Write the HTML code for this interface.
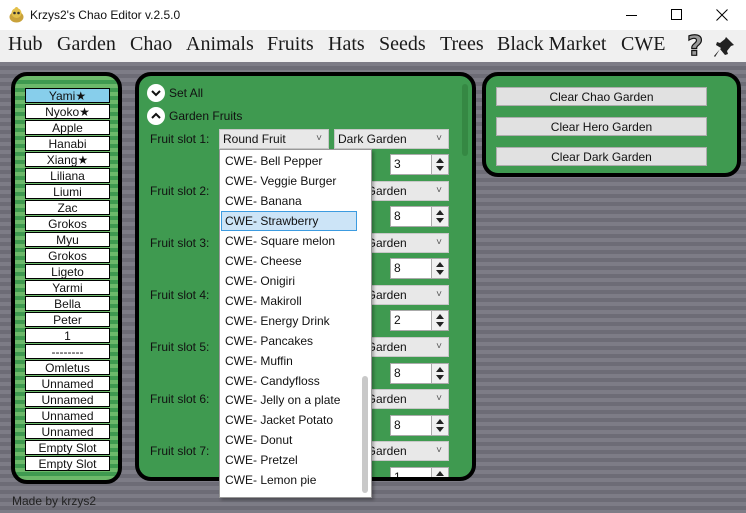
<!DOCTYPE html>
<html><head><meta charset="utf-8"><style>
*{box-sizing:border-box;margin:0;padding:0}
body{width:746px;height:513px;overflow:hidden;position:relative;font-family:"Liberation Sans","DejaVu Sans",sans-serif;font-size:12px;color:#111;background:#fff}
.abs{position:absolute}
#title{left:0;top:0;width:746px;height:30px;background:#fff}
#menu{left:0;top:30px;width:746px;height:32px;background:#f0f0f0;font-family:"Liberation Serif",serif;font-size:20px;color:#1a1a1a}
#menu span{position:absolute;top:3px}
#bg{left:0;top:62px;width:746px;height:451px;background:repeating-linear-gradient(180deg,#7d7c86 0 4px,#6d6c76 4px 8px)}
.panel{border:4px solid #000;border-radius:16px;background:#3f9a50}
#left{left:11px;top:72px;width:111px;height:412px;background:repeating-linear-gradient(180deg,#6cb96a 0 4px,#3f9a50 4px 8px)}
.item{position:absolute;left:25px;width:85px;height:15px;background:#fff;border:1px solid #000;text-align:center;font-size:12px;line-height:14px}
#mid{left:135px;top:72px;width:341px;height:409px}
#right{left:482px;top:72px;width:259px;height:105px}
.btn{position:absolute;left:496px;width:211px;height:19px;background:#e1e1e1;border:1px solid #adadad;text-align:center;line-height:19px;font-size:12px}
.lbl{position:absolute;left:150px;font-size:12px;color:#111}
.combo{position:absolute;height:20px;background:#e8e8e8;border:1px solid #c8c8c8;font-size:12px;line-height:18px;padding-left:3px}
.combo:after{content:"˅";position:absolute;right:6px;top:0;font-size:10px;color:#555}
.num{position:absolute;left:390px;width:59px;height:21px;background:#fff;border:1px solid #aaa;font-size:12px;line-height:19px;padding-left:3px}
.num i{position:absolute;right:0;top:0;width:17px;height:19px;background:#f0f0f0;border-left:1px solid #aaa}
.num i:before{content:"";position:absolute;left:4px;top:3px;border:4px solid transparent;border-top:0;border-bottom:5px solid #222}
.num i:after{content:"";position:absolute;left:4px;top:11px;border:4px solid transparent;border-bottom:0;border-top:5px solid #222}
#dd{left:219px;top:149px;width:153px;height:349px;background:#fff;border:1px solid #999;box-shadow:2px 2px 3px rgba(0,0,0,.3)}
.opt{position:absolute;left:5px;font-size:12px;color:#111}
.circ{position:absolute;left:147px;width:18px;height:18px;border-radius:50%;background:#fff}
</style></head><body>
<div id="title" class="abs">
 <svg class="abs" style="left:8px;top:7px" width="17" height="16"><ellipse cx="8.5" cy="10" rx="7" ry="5.5" fill="#c9a23a"/><circle cx="8.5" cy="6" r="5" fill="#e3c04a"/><circle cx="6.5" cy="6" r="1.3" fill="#333"/><circle cx="10.5" cy="6" r="1.3" fill="#333"/><circle cx="8.5" cy="1.5" r="1.5" fill="#e3c04a"/></svg>
 <span class="abs" style="left:30px;top:8px;font-size:12px">Krzys2's Chao Editor v.2.5.0</span>
 <div class="abs" style="left:626px;top:15px;width:11px;height:1px;background:#000"></div>
 <div class="abs" style="left:671px;top:9px;width:11px;height:11px;border:1px solid #000"></div>
 <svg class="abs" style="left:716px;top:9px" width="12" height="12"><path d="M0.5 0.5L11.5 11.5M11.5 0.5L0.5 11.5" stroke="#000"/></svg>
</div>
<div id="menu" class="abs">
 <span style="left:8px">Hub</span><span style="left:57px">Garden</span><span style="left:130px">Chao</span><span style="left:186px">Animals</span><span style="left:267px">Fruits</span><span style="left:328px">Hats</span><span style="left:379px">Seeds</span><span style="left:440px">Trees</span><span style="left:497px">Black Market</span><span style="left:621px">CWE</span>
 <span style="left:687px;top:-1px;font-size:28px;font-weight:bold;font-family:'DejaVu Sans',sans-serif;color:#999;-webkit-text-stroke:1.2px #111">?</span>
 <svg class="abs" style="left:712px;top:5px" width="24" height="24"><path d="M14 2L22 10L19 11L15 16L16 19L13 20L8 14L3 22L2 21L9 13L4 10L5 7L8 8L13 4Z" fill="#222"/></svg>
</div>
<div id="bg" class="abs"></div>
<div id="left" class="abs panel"></div>
<div class="item" style="top:88px;background:#87ceeb">Yami★</div>
<div class="item" style="top:104px">Nyoko★</div>
<div class="item" style="top:120px">Apple</div>
<div class="item" style="top:136px">Hanabi</div>
<div class="item" style="top:152px">Xiang★</div>
<div class="item" style="top:168px">Liliana</div>
<div class="item" style="top:184px">Liumi</div>
<div class="item" style="top:200px">Zac</div>
<div class="item" style="top:216px">Grokos</div>
<div class="item" style="top:232px">Myu</div>
<div class="item" style="top:248px">Grokos</div>
<div class="item" style="top:264px">Ligeto</div>
<div class="item" style="top:280px">Yarmi</div>
<div class="item" style="top:296px">Bella</div>
<div class="item" style="top:312px">Peter</div>
<div class="item" style="top:328px">1</div>
<div class="item" style="top:344px">--------</div>
<div class="item" style="top:360px">Omletus</div>
<div class="item" style="top:376px">Unnamed</div>
<div class="item" style="top:392px">Unnamed</div>
<div class="item" style="top:408px">Unnamed</div>
<div class="item" style="top:424px">Unnamed</div>
<div class="item" style="top:440px">Empty Slot</div>
<div class="item" style="top:456px">Empty Slot</div>

<div id="mid" class="abs panel"></div>
<div class="abs" style="left:462px;top:84px;width:6px;height:72px;background:#358843;border-radius:3px"></div>
<div class="circ" style="top:84px"><svg width="18" height="18"><path d="M5 7L9 11L13 7" stroke="#111" stroke-width="2" fill="none"/></svg></div>
<span class="abs" style="left:169px;top:86px">Set All</span>
<div class="circ" style="top:107px"><svg width="18" height="18"><path d="M5 11L9 7L13 11" stroke="#111" stroke-width="2" fill="none"/></svg></div>
<span class="abs" style="left:169px;top:109px">Garden Fruits</span>

<span class="lbl" style="top:132px">Fruit slot 1:</span>
<div class="combo" style="left:219px;top:129px;width:110px">Round Fruit</div>
<div class="combo" style="left:334px;top:129px;width:115px">Dark Garden</div>
<div class="num" style="top:154px">3<i></i></div>
<span class="lbl" style="top:184px">Fruit slot 2:</span>
<div class="combo" style="left:334px;top:181px;width:115px">Dark Garden</div>
<div class="num" style="top:206px">8<i></i></div>
<span class="lbl" style="top:236px">Fruit slot 3:</span>
<div class="combo" style="left:334px;top:233px;width:115px">Dark Garden</div>
<div class="num" style="top:258px">8<i></i></div>
<span class="lbl" style="top:288px">Fruit slot 4:</span>
<div class="combo" style="left:334px;top:285px;width:115px">Dark Garden</div>
<div class="num" style="top:310px">2<i></i></div>
<span class="lbl" style="top:340px">Fruit slot 5:</span>
<div class="combo" style="left:334px;top:337px;width:115px">Dark Garden</div>
<div class="num" style="top:363px">8<i></i></div>
<span class="lbl" style="top:392px">Fruit slot 6:</span>
<div class="combo" style="left:334px;top:389px;width:115px">Dark Garden</div>
<div class="num" style="top:415px">8<i></i></div>
<span class="lbl" style="top:444px">Fruit slot 7:</span>
<div class="combo" style="left:334px;top:441px;width:115px">Dark Garden</div>
<div class="abs" style="left:390px;top:467px;width:59px;height:10px;overflow:hidden"><div class="num" style="left:0;top:0">1<i></i></div></div>

<div id="dd" class="abs">
 <div class="abs" style="left:1px;top:61px;width:136px;height:20px;background:#cce4f7;border:1px solid #3c9be0"></div>
 <div class="abs" style="left:142px;top:226px;width:6px;height:117px;background:#c9c9c9;border-radius:3px"></div>
 <span class="opt" style="top:4px">CWE- Bell Pepper</span>
 <span class="opt" style="top:24px">CWE- Veggie Burger</span>
 <span class="opt" style="top:44px">CWE- Banana</span>
 <span class="opt" style="top:64px">CWE- Strawberry</span>
 <span class="opt" style="top:84px">CWE- Square melon</span>
 <span class="opt" style="top:104px">CWE- Cheese</span>
 <span class="opt" style="top:124px">CWE- Onigiri</span>
 <span class="opt" style="top:144px">CWE- Makiroll</span>
 <span class="opt" style="top:164px">CWE- Energy Drink</span>
 <span class="opt" style="top:184px">CWE- Pancakes</span>
 <span class="opt" style="top:204px">CWE- Muffin</span>
 <span class="opt" style="top:224px">CWE- Candyfloss</span>
 <span class="opt" style="top:243px">CWE- Jelly on a plate</span>
 <span class="opt" style="top:263px">CWE- Jacket Potato</span>
 <span class="opt" style="top:283px">CWE- Donut</span>
 <span class="opt" style="top:303px">CWE- Pretzel</span>
 <span class="opt" style="top:323px">CWE- Lemon pie</span>
</div>

<div id="right" class="abs panel"></div>
<div class="btn" style="top:87px">Clear Chao Garden</div>
<div class="btn" style="top:117px">Clear Hero Garden</div>
<div class="btn" style="top:147px">Clear Dark Garden</div>

<span class="abs" style="left:12px;top:494px;font-size:12px;color:#222">Made by krzys2</span>
</body></html>
